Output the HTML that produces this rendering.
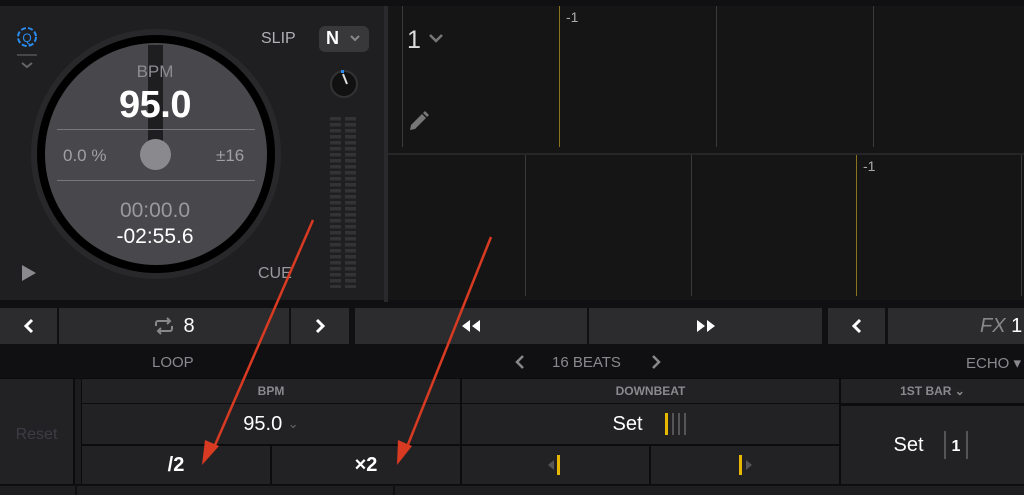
<!DOCTYPE html>
<html><head><meta charset="utf-8"><style>
*{margin:0;padding:0;box-sizing:border-box}
body{width:1024px;height:495px;background:#101012;position:relative;overflow:hidden;font-family:"Liberation Sans",sans-serif;color:#fff}
.a{position:absolute}
.btn{position:absolute;background:#2c2c2e;display:flex;align-items:center;justify-content:center}
.cell{position:absolute;background:#222224;display:flex;align-items:center;justify-content:center}
.hd{font-size:12px;color:#8a8a8e;font-weight:bold}
</style></head><body>
<div class="a" style="left:0;top:6px;width:384px;height:294px;background:#1f1f21"></div>
<div class="a" style="left:384px;top:6px;width:4px;height:296px;background:#2a2a2c"></div>
<svg class="a" style="left:14px;top:26px" width="26" height="50"><circle cx="13" cy="11" r="9" fill="none" stroke="#2a8cf0" stroke-width="2" stroke-dasharray="5 2.2"/><text x="13" y="16" fill="#2a8cf0" font-size="12" font-family="Liberation Sans" text-anchor="middle">Q</text><line x1="3" y1="29" x2="23" y2="29" stroke="#555" stroke-width="1.5"/><path d="M8 37 L13 41 L18 37" fill="none" stroke="#666" stroke-width="2"/></svg>
<div class="a" style="left:31px;top:29px;width:250px;height:250px;border-radius:50%;background:#28282a"></div>
<div class="a" style="left:37px;top:35px;width:238px;height:238px;border-radius:50%;background:#000"></div>
<div class="a" style="left:45px;top:43px;width:222px;height:222px;border-radius:50%;background:#48484c"></div>
<div class="a" style="left:148px;top:45px;width:15px;height:96px;background:#1e1e20"></div>
<div class="a" style="left:57px;top:129px;width:198px;height:1px;background:#77777b"></div>
<div class="a" style="left:57px;top:180px;width:198px;height:1px;background:#77777b"></div>
<div class="a" style="left:140px;top:139px;width:31px;height:31px;border-radius:50%;background:#8a8a8e"></div>
<div class="a" style="left:105px;top:62px;width:100px;text-align:center;font-size:17px;color:#8e8e92">BPM</div>
<div class="a" style="left:95px;top:84px;width:120px;text-align:center;font-size:38px;font-weight:bold;letter-spacing:-0.5px">95.0</div>
<div class="a" style="left:63px;top:146px;font-size:17px;color:#a0a0a4">0.0 %</div>
<div class="a" style="left:216px;top:146px;font-size:17px;color:#a0a0a4">±16</div>
<div class="a" style="left:80px;top:199px;width:150px;text-align:center;font-size:21px;color:#9a9a9e">00:00.0</div>
<div class="a" style="left:80px;top:225px;width:150px;text-align:center;font-size:21px;color:#fff">-02:55.6</div>
<svg class="a" style="left:20px;top:264px" width="18" height="18"><path d="M2 1 L16 9 L2 17Z" fill="#8a8a8e"/></svg>
<div class="a" style="left:258px;top:265px;font-size:16px;color:#9a9a9e">CUE</div>
<div class="a" style="left:261px;top:30px;font-size:16px;color:#b0b0b4">SLIP</div>
<div class="a" style="left:319px;top:26px;width:50px;height:26px;border-radius:6px;background:#38383a"></div>
<div class="a" style="left:326px;top:28px;font-size:18px;font-weight:bold">N</div>
<svg class="a" style="left:349px;top:34px" width="12" height="10"><path d="M2 2 L6 6 L10 2" fill="none" stroke="#888" stroke-width="2"/></svg>
<svg class="a" style="left:328px;top:68px" width="32" height="32"><circle cx="16" cy="16" r="13" fill="#111" stroke="#333" stroke-width="2"/><line x1="15" y1="6" x2="19" y2="16" stroke="#ddd" stroke-width="2"/><rect x="13" y="2" width="3" height="3" fill="#2a8cf0"/></svg>
<svg class="a" style="left:330px;top:117px" width="28" height="171">
<defs><pattern id="m" width="28" height="6" patternUnits="userSpaceOnUse"><rect x="0" y="0" width="11" height="3.5" fill="#333335"/><rect x="15" y="0" width="11" height="3.5" fill="#333335"/></pattern></defs>
<rect width="28" height="171" fill="url(#m)"/></svg>
<div class="a" style="left:388px;top:6px;width:636px;height:294px;background:#151515"></div>
<div class="a" style="left:388px;top:153px;width:636px;height:2px;background:#262628"></div>
<div class="a" style="left:402px;top:6px;width:1px;height:141px;background:#3a3a3c"></div>
<div class="a" style="left:559px;top:6px;width:1px;height:141px;background:#8a7420"></div>
<div class="a" style="left:716px;top:6px;width:1px;height:141px;background:#3a3a3c"></div>
<div class="a" style="left:873px;top:6px;width:1px;height:141px;background:#3a3a3c"></div>
<div class="a" style="left:525px;top:155px;width:1px;height:141px;background:#3a3a3c"></div>
<div class="a" style="left:691px;top:155px;width:1px;height:141px;background:#3a3a3c"></div>
<div class="a" style="left:856px;top:155px;width:1px;height:141px;background:#8a7420"></div>
<div class="a" style="left:1021px;top:155px;width:1px;height:141px;background:#3a3a3c"></div>
<div class="a" style="left:566px;top:9px;font-size:14px;color:#aaa">-1</div>
<div class="a" style="left:863px;top:158px;font-size:14px;color:#aaa">-1</div>
<div class="a" style="left:407px;top:26px;font-size:25px;color:#ddd">1</div>
<svg class="a" style="left:428px;top:33px" width="16" height="12"><path d="M2 2 L8 8 L14 2" fill="none" stroke="#777" stroke-width="2.5"/></svg>
<svg class="a" style="left:408px;top:110px" width="22" height="22"><path d="M2 20 L3 15 L14 4 L18 8 L7 19Z M15 3 L17 1 L21 5 L19 7Z" fill="#777"/></svg>
<div class="btn" style="left:0;top:308px;width:57px;height:36px"><svg width="12" height="16"><path d="M9 2 L3 8 L9 14" fill="none" stroke="#fff" stroke-width="3"/></svg></div>
<div class="btn" style="left:59px;top:308px;width:230px;height:36px;gap:8px"><svg width="22" height="18"><path d="M3 9 V6 a2 2 0 0 1 2-2 H17 M14 1 L17 4 L14 7 M19 9 v3 a2 2 0 0 1 -2 2 H5 M8 17 L5 14 L8 11" fill="none" stroke="#888" stroke-width="2"/></svg><span style="font-size:20px">8</span></div>
<div class="btn" style="left:291px;top:308px;width:58px;height:36px"><svg width="12" height="16"><path d="M3 2 L9 8 L3 14" fill="none" stroke="#fff" stroke-width="3"/></svg></div>
<div class="btn" style="left:355px;top:308px;width:232px;height:36px"><svg width="22" height="12"><path d="M10 0 L2 6 L10 12Z M20 0 L12 6 L20 12Z" fill="#fff"/></svg></div>
<div class="btn" style="left:589px;top:308px;width:233px;height:36px"><svg width="22" height="12"><path d="M2 0 L10 6 L2 12Z M12 0 L20 6 L12 12Z" fill="#fff"/></svg></div>
<div class="btn" style="left:828px;top:308px;width:57px;height:36px"><svg width="12" height="16"><path d="M9 2 L3 8 L9 14" fill="none" stroke="#fff" stroke-width="3"/></svg></div>
<div class="btn" style="left:888px;top:308px;width:136px;height:36px;justify-content:flex-start;padding-left:92px;font-size:20px"><i style="color:#888">FX</i>&nbsp;1</div>
<div class="a" style="left:152px;top:354px;font-size:15px;color:#8a8a8e">LOOP</div>
<svg class="a" style="left:514px;top:354px" width="12" height="16"><path d="M9 2 L3 8 L9 14" fill="none" stroke="#888" stroke-width="2.5"/></svg>
<div class="a" style="left:552px;top:354px;font-size:15px;color:#8a8a8e">16 BEATS</div>
<svg class="a" style="left:650px;top:354px" width="12" height="16"><path d="M3 2 L9 8 L3 14" fill="none" stroke="#888" stroke-width="2.5"/></svg>
<div class="a" style="left:966px;top:354px;font-size:15px;color:#8a8a8e">ECHO ▾</div>
<div class="a" style="left:0;top:378px;width:1024px;height:107px;background:#0c0c0e"></div>
<div class="cell" style="left:0;top:379px;width:73px;height:105px;font-size:16px;color:#3c3c44;padding-top:6px">Reset</div>
<div class="cell" style="left:75px;top:379px;width:6px;height:105px;background:#1c1c1e"></div>
<div class="cell hd" style="left:82px;top:379px;width:378px;height:24px">BPM</div>
<div class="cell" style="left:82px;top:404px;width:378px;height:40px;font-size:20px">95.0&nbsp;<span style="color:#666;font-size:13px">⌄</span></div>
<div class="cell" style="left:82px;top:446px;width:188px;height:38px;font-size:20px;font-weight:bold">/2</div>
<div class="cell" style="left:272px;top:446px;width:188px;height:38px;font-size:20px;font-weight:bold">×2</div>
<div class="cell hd" style="left:462px;top:379px;width:377px;height:24px">DOWNBEAT</div>
<div class="cell" style="left:462px;top:404px;width:377px;height:40px;font-size:20px">Set<svg style="margin-left:20px" width="26" height="26"><rect x="2" y="2" width="3" height="22" fill="#e8b800"/><rect x="9" y="2" width="2" height="22" fill="#555"/><rect x="15" y="2" width="2" height="22" fill="#555"/><rect x="21" y="2" width="2" height="22" fill="#555"/></svg></div>
<div class="cell" style="left:462px;top:446px;width:187px;height:38px"><svg width="20" height="24"><path d="M8 7 L2 12 L8 17Z" fill="#555"/><rect x="11" y="2" width="3" height="20" fill="#e8b800"/></svg></div>
<div class="cell" style="left:651px;top:446px;width:188px;height:38px"><svg width="20" height="24"><rect x="4" y="2" width="3" height="20" fill="#e8b800"/><path d="M11 7 L17 12 L11 17Z" fill="#555"/></svg></div>
<div class="cell hd" style="left:841px;top:379px;width:183px;height:24px">1ST BAR ⌄</div>
<div class="cell" style="left:841px;top:406px;width:183px;height:78px;font-size:20px">Set<svg style="margin-left:18px" width="30" height="30"><rect x="2" y="1" width="2" height="28" fill="#555"/><text x="14" y="21" fill="#fff" font-size="16" font-weight="bold" font-family="Liberation Sans" text-anchor="middle">1</text><rect x="24" y="1" width="2" height="28" fill="#555"/></svg></div>
<div class="a" style="left:0;top:486px;width:75px;height:9px;background:#1e1e20"></div>
<div class="a" style="left:77px;top:486px;width:316px;height:9px;background:#1e1e20"></div>
<div class="a" style="left:395px;top:486px;width:629px;height:9px;background:#1e1e20"></div>
<svg class="a" style="left:0;top:0" width="1024" height="495">
<line x1="313" y1="220" x2="212" y2="452" stroke="#d83a22" stroke-width="2.5"/>
<path d="M202 465 L205 440 L219 446Z" fill="#d83a22"/>
<line x1="491" y1="237" x2="405" y2="452" stroke="#d83a22" stroke-width="2.5"/>
<path d="M397 465 L398 440 L412 446Z" fill="#d83a22"/>
</svg>
</body></html>
